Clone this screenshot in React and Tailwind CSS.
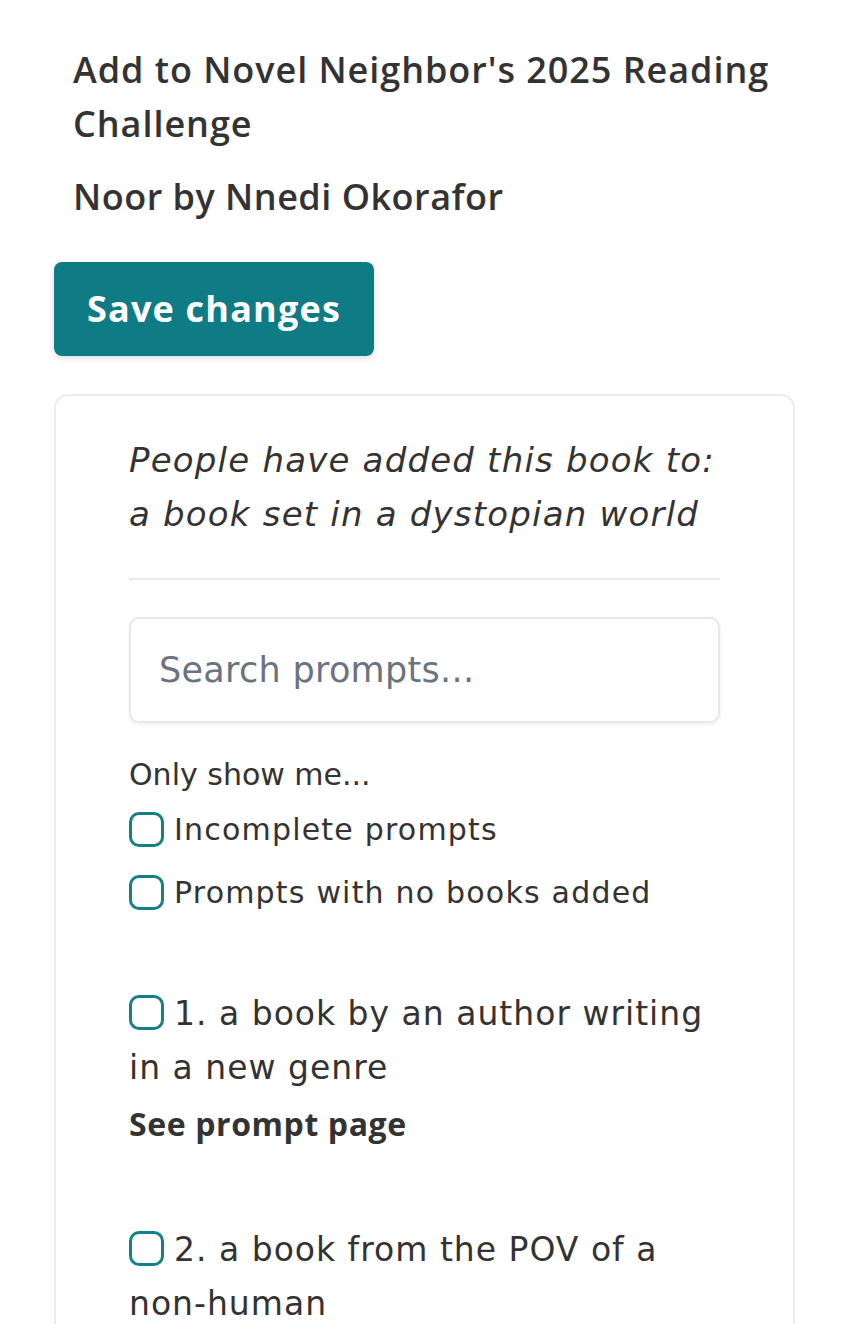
import React from "react";

function Box({ inline }) {
  return (
    <span
      className={
        "inline-block w-[35px] h-[35px] shrink-0 rounded-[10px] border-[3px] border-[#13808a] bg-white " +
        (inline ? "align-[-5px] mr-[10px]" : "")
      }
    />
  );
}

export default function App() {
  const head = { fontFamily: '"Open Sans", "Liberation Sans", sans-serif' };
  const body = { fontFamily: '"DejaVu Sans", "Open Sans", sans-serif' };
  return (
    <div className="min-h-[1324px] bg-white text-[#333333] px-[54px] pt-[43px]" style={head}>
      <div className="pl-[19px] pr-[20px]">
        <h1 className="text-[36px] leading-[54px] font-semibold tracking-[0.95px]">
          Add to Novel Neighbor's 2025 Reading Challenge
        </h1>
        <h2 className="mt-[19px] text-[36px] leading-[54px] font-semibold tracking-[0.5px]">
          Noor by Nnedi Okorafor
        </h2>
      </div>
      <button className="mt-[38px] h-[94px] w-[320px] rounded-[8px] bg-[#0f7b85] text-white text-[36px] font-bold tracking-[1.2px] shadow-[0_2px_6px_rgba(0,0,0,0.15)]">
        Save changes
      </button>
      <div
        className="mt-[38px] w-[741px] rounded-t-[14px] border-2 border-b-0 border-[#ececec] px-[73px] pt-[37px] pb-[20px]"
        style={body}
      >
        <p className="italic text-[34px] leading-[54px] tracking-[1.2px]">
          People have added this book to:
          <br />
          a book set in a dystopian world
        </p>
        <div className="mt-[37px] h-[2px] bg-[#e8e8e8]" />
        <div className="mt-[37px] h-[106px] rounded-[10px] border-2 border-[#e8e8e8] shadow-[0_2px_4px_rgba(0,0,0,0.06)] flex items-center px-[28px]">
          <span className="text-[35px] tracking-[0.3px] text-[#6b7280]">Search prompts...</span>
        </div>
        <div className="mt-[25px] text-[30px] leading-[54px]">Only show me...</div>
        <label className="flex items-center gap-[10px] h-[54px] text-[30px] tracking-[1.2px]">
          <Box />
          <span>Incomplete prompts</span>
        </label>
        <label className="mt-[9px] flex items-center gap-[10px] h-[54px] text-[30px] tracking-[1.2px]">
          <Box />
          <span>Prompts with no books added</span>
        </label>
        <div className="mt-[68px]">
          <p className="text-[33px] leading-[54px] tracking-[1px]">
            <Box inline />
            1. a book by an author writing in a new genre
          </p>
          <p className="mt-[2px] text-[32px] leading-[54px] font-bold tracking-[0.6px]" style={head}>
            See prompt page
          </p>
        </div>
        <div className="mt-[72px]">
          <p className="text-[33px] leading-[54px] tracking-[1px]">
            <Box inline />
            2. a book from the POV of a <span className="whitespace-nowrap">non-human</span>
          </p>
        </div>
      </div>
    </div>
  );
}
